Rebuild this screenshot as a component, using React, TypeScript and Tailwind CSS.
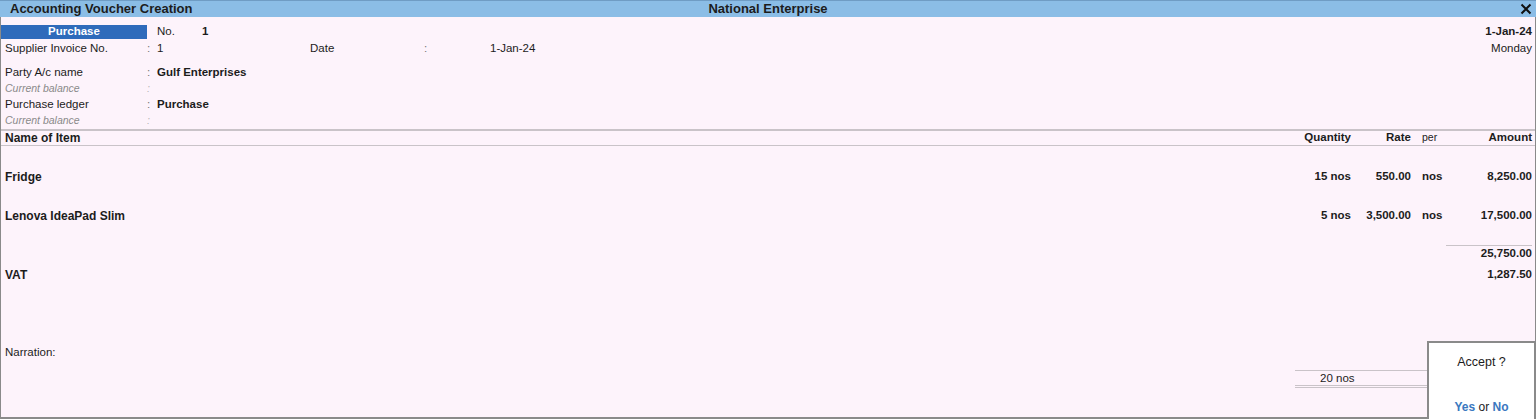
import React from 'react'

const font = "font-['Liberation_Sans',Arial,sans-serif]"

function Field({ label, value, bold, muted }: { label: string; value?: string; bold?: boolean; muted?: boolean }) {
  return (
    <div className={`flex h-4 items-center ${muted ? 'text-[10.5px] italic text-[#8a8a8a]' : ''}`}>
      <span className="w-[146px] pl-[4px]">{label}</span>
      <span className={`w-[10px] ${muted ? 'text-[#b5b5b5]' : 'text-[#777]'}`}>:</span>
      <span className={bold ? 'font-bold' : ''}>{value}</span>
    </div>
  )
}

function ItemRow({ name, qty, rate, per, amount, className = '' }: { name: string; qty?: string; rate?: string; per?: string; amount?: string; className?: string }) {
  return (
    <div className={`flex h-4 items-center font-bold ${className}`}>
      <span className="flex-1 pl-[4px] text-[12px]">{name}</span>
      <span className="w-[100px] text-right">{qty}</span>
      <span className="w-[60px] text-right">{rate}</span>
      <span className="w-[35px] pl-[11px]">{per}</span>
      <span className="w-[86px] text-right">{amount}</span>
      <span className="w-[3px]" />
    </div>
  )
}

export default function App() {
  return (
    <div className={`${font} relative flex h-[419px] w-[1536px] flex-col overflow-hidden bg-[#fdf3fb] text-[11.5px] text-[#1c1c1c]`}>
      {/* title bar */}
      <div className="relative flex h-[17px] shrink-0 items-center border-t border-[#6f9cc4] bg-[#8bbde6] text-[13px] font-bold">
        <span className="pl-[10px]">Accounting Voucher Creation</span>
        <span className="absolute left-1/2 -translate-x-1/2">National Enterprise</span>
        <svg className="absolute right-[4px] top-[2px]" width="12" height="12" viewBox="0 0 12 12">
          <path d="M1.5 1.5 L10.5 10.5 M10.5 1.5 L1.5 10.5" stroke="#111" strokeWidth="2" />
        </svg>
      </div>

      <div className="flex flex-1 flex-col border-x border-b-2 border-[#8a8a8a]">
        {/* voucher header */}
        <div className="flex pt-[8px]">
          <div className="flex-1">
            <div className="flex h-[14px] items-center">
              <span className="flex h-[14px] w-[146px] items-center justify-center bg-[#2e6bbb] font-bold text-white">Purchase</span>
              <span className="pl-[10px]">No.</span>
              <span className="pl-[27px] font-bold">1</span>
            </div>
            <div className="mt-[2px] flex h-4 items-center">
              <span className="w-[146px] pl-[4px]">Supplier Invoice No.</span>
              <span className="w-[10px] text-[#777]">:</span>
              <span className="w-[153px]">1</span>
              <span className="w-[114px]">Date</span>
              <span className="w-[66px] text-[#777]">:</span>
              <span>1-Jan-24</span>
            </div>
          </div>
          <div className="flex flex-col items-end pr-[3px]">
            <span className="flex h-[14px] items-center font-bold">1-Jan-24</span>
            <span className="mt-[2px] flex h-4 items-center">Monday</span>
          </div>
        </div>

        <div className="mt-[8px]">
          <Field label="Party A/c name" value="Gulf Enterprises" bold />
          <Field label="Current balance" muted />
          <Field label="Purchase ledger" value="Purchase" bold />
          <Field label="Current balance" muted />
        </div>

        {/* item table header */}
        <div className="flex h-[17px] items-center border-t-2 border-b border-[#c9c3c8] font-bold">
          <span className="flex-1 pl-[4px] text-[12px]">Name of Item</span>
          <span className="w-[100px] text-right">Quantity</span>
          <span className="w-[60px] text-right">Rate</span>
          <span className="w-[35px] pl-[11px] text-[10.5px] font-normal">per</span>
          <span className="w-[86px] text-right">Amount</span>
          <span className="w-[3px]" />
        </div>

        <ItemRow className="mt-[23px]" name="Fridge" qty="15 nos" rate="550.00" per="nos" amount="8,250.00" />
        <ItemRow className="mt-[23px]" name="Lenova IdeaPad Slim" qty="5 nos" rate="3,500.00" per="nos" amount="17,500.00" />

        <div className="mt-[21px] flex justify-end pr-[3px]">
          <div className="flex h-4 w-[86px] items-center justify-end border-t border-[#c9c3c8] font-bold">25,750.00</div>
        </div>
        <ItemRow className="mt-[6px]" name="VAT" amount="1,287.50" />

        {/* narration + totals */}
        <div className="mt-auto mb-[29px] flex items-end">
          <span className="mb-[27px] flex h-4 flex-1 items-center pl-[4px]">Narration:</span>
          <div className="mr-[108px] w-[132px] border-t border-b-[3px] border-double border-[#c9c3c8]">
            <div className="flex h-[14px] items-center pl-[25px] pt-[2px]">20 nos</div>
          </div>
        </div>
      </div>

      {/* accept dialog */}
      <div className="absolute bottom-0 right-0 flex h-[78px] w-[109px] flex-col items-center justify-between border-2 border-b-0 border-[#8a8a8a] bg-white pb-[3px] pt-[10px]">
        <span className="text-[12.5px]">Accept ?</span>
        <span className="text-[12px]">
          <span className="font-bold text-[#3a78c0]">Yes</span> or <span className="font-bold text-[#3a78c0]">No</span>
        </span>
      </div>
    </div>
  )
}
